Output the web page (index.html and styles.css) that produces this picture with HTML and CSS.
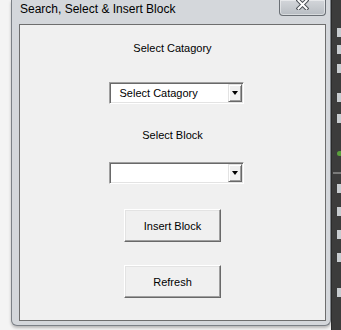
FILE: index.html
```html
<!DOCTYPE html>
<html lang="en">
<head>
  <meta charset="UTF-8" />
  <title>Search, Select &amp; Insert Block</title>
  <link rel="stylesheet" href="styles.css">
</head>
<body>

  <div class="window">
    <div class="titlebar">
      <span class="title">Search, Select &amp; Insert Block</span>
      <div class="closeBtn">
        <svg width="13" height="11" viewBox="0 0 13 11">
          <path d="M2.5 1.5 L10.5 9.5 M10.5 1.5 L2.5 9.5" stroke="#4a4f55" stroke-width="4" stroke-linecap="square" fill="none"/>
          <path d="M2.5 1.5 L10.5 9.5 M10.5 1.5 L2.5 9.5" stroke="#ffffff" stroke-width="2" stroke-linecap="square" fill="none"/>
        </svg>
      </div>
    </div>

    <div class="panel">
      <p class="label first">Select Catagory</p>
      <div class="combo">
        <span class="comboText">Select Catagory</span>
        <span class="dropBtn"><span class="arrow"></span></span>
      </div>

      <p class="label second">Select Block</p>
      <div class="combo lower">
        <span class="comboText"></span>
        <span class="dropBtn"><span class="arrow"></span></span>
      </div>

      <button class="btn insert">Insert Block</button>
      <button class="btn refresh">Refresh</button>
    </div>
  </div>

  <!-- other app behind the dialog -->
  <div class="behind">
    <span class="mark" style="margin-top: 28px"></span>
    <span class="mark" style="margin-top: 8px"></span>
    <span class="mark" style="margin-top: 10px"></span>
    <span class="mark" style="margin-top: 20px"></span>
    <span class="mark" style="margin-top: 12px"></span>
    <span class="dot"></span>
    <span class="sep"></span>
    <span class="mark" style="margin-top: 10px"></span>
    <span class="mark" style="margin-top: 14px"></span>
    <span class="mark" style="margin-top: 14px"></span>
    <span class="mark" style="margin-top: 14px"></span>
    <span class="mark" style="margin-top: 26px"></span>
  </div>

</body>
</html>
```

FILE: styles.css
```css
body {
  margin: 0;
  width: 341px;
  height: 330px;
  overflow: hidden;
  background-color: #f4f4f4;
  font-family: "Liberation Sans", Arial, sans-serif;
  display: flex;
  padding-left: 11px;
  box-sizing: border-box;
}
.window {
  width: 321px;
  height: 326px;
  box-sizing: border-box;
  border: 1px solid #7b8086;
  border-top: none;
  border-radius: 0 0 6px 6px;
  background-color: #d4d7db;
  padding: 0 4px 4px 7px;
  display: flex;
  flex-direction: column;
  box-shadow: 0 2px 3px rgba(0, 0, 0, 0.25);
}
.titlebar {
  height: 24px;
  display: flex;
  align-items: flex-start;
  flex-shrink: 0;
}
.title {
  font-size: 12px;
  line-height: 15px;
  padding-top: 2px;
  padding-left: 1px;
  color: #000;
}
.closeBtn {
  margin-left: auto;
  width: 47px;
  height: 16px;
  box-sizing: border-box;
  border: 1px solid #6a6f75;
  border-top: none;
  border-radius: 0 0 4px 4px;
  background: linear-gradient(#d3d6da, #c3c7cc 60%, #b7bcc2);
  box-shadow: inset 0 0 0 1px rgba(255, 255, 255, 0.45);
  display: flex;
  justify-content: center;
  align-items: flex-start;
}
.closeBtn svg {
  margin-top: -1px;
}
.panel {
  flex: 1;
  background-color: #f0f0f0;
  border: 1px solid #6e6e6e;
  display: flex;
  flex-direction: column;
  align-items: center;
}
.label {
  margin: 0;
  font-size: 11px;
  line-height: 13px;
  color: #000;
}
.label.first {
  margin-top: 17px;
}
.label.second {
  margin-top: 25px;
}
.combo {
  width: 135px;
  height: 22px;
  box-sizing: border-box;
  margin-top: 27px;
  margin-left: 7px;
  background-color: #fff;
  border: 1px solid;
  border-color: #a0a0a0 #ffffff #ffffff #a0a0a0;
  box-shadow: inset 1px 1px 0 #696969, inset -1px -1px 0 #e3e3e3;
  display: flex;
  align-items: center;
  padding: 1px 1px 1px 1px;
}
.combo.lower {
  margin-top: 20px;
}
.comboText {
  flex: 1;
  font-size: 11px;
  padding-left: 9px;
  color: #000;
}
.dropBtn {
  width: 14px;
  height: 18px;
  box-sizing: border-box;
  background-color: #f0f0f0;
  border: 1px solid;
  border-color: #e3e3e3 #696969 #696969 #e3e3e3;
  box-shadow: inset 1px 1px 0 #fff, inset -1px -1px 0 #a0a0a0;
  display: flex;
  justify-content: center;
  align-items: center;
}
.arrow {
  width: 0;
  height: 0;
  border-left: 3.5px solid transparent;
  border-right: 3.5px solid transparent;
  border-top: 4px solid #000;
}
.btn {
  width: 97px;
  height: 33px;
  box-sizing: border-box;
  margin: 0;
  padding: 0;
  font-family: "Liberation Sans", Arial, sans-serif;
  font-size: 11px;
  color: #000;
  background-color: #f0f0f0;
  border: 1px solid;
  border-color: #ffffff #696969 #696969 #ffffff;
  box-shadow: inset -1px -1px 0 #a0a0a0, inset 1px 1px 0 #e3e3e3;
  cursor: pointer;
}
.btn.insert {
  margin-top: 25px;
}
.btn.refresh {
  margin-top: 23px;
}
.behind {
  width: 9px;
  height: 330px;
  background-color: #3c3c3c;
  border-left: 1px solid #2a2a2a;
  display: flex;
  flex-direction: column;
  align-items: flex-end;
  flex-shrink: 0;
}
.mark {
  width: 4px;
  height: 9px;
  background-color: #c8ccd0;
}
.dot {
  width: 4px;
  height: 5px;
  margin-top: 28px;
  border-radius: 3px 0 0 3px;
  background-color: #5aa03c;
}
.sep {
  width: 8px;
  height: 2px;
  margin-top: 16px;
  background-color: #7a7a7a;
}
```
